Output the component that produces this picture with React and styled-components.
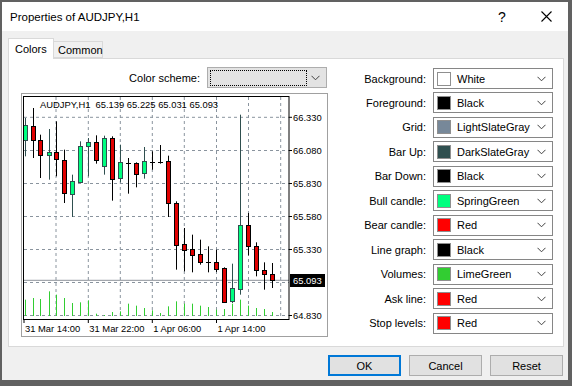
import React from "react";
import styled, { createGlobalStyle } from "styled-components";

const GlobalStyle = createGlobalStyle`
  html, body { margin: 0; padding: 0; background: #616161; }
  body { font-family: "Liberation Sans", Arial, sans-serif; font-size: 11px; color: #000; }
  * { box-sizing: border-box; }
`;

const Page = styled.div`
  width: 572px;
  height: 386px;
  overflow: hidden;
  padding: 2px 0 0 2px;
`;

const Window = styled.div`
  width: 566px;
  height: 378px;
  background: #f0f0f0;
  display: flex;
  flex-direction: column;
`;

const TitleBar = styled.div`
  height: 29px;
  background: #fff;
  display: flex;
  align-items: center;
  padding-left: 8px;
`;

const Title = styled.div`
  flex: 1;
  font-size: 11.5px;
`;

const CaptionButton = styled.div`
  width: 44px;
  height: 29px;
  display: flex;
  align-items: center;
  justify-content: center;
  font-size: 14px;
`;

const TabRow = styled.div`
  display: flex;
  align-items: flex-end;
  height: 20px;
  margin: 7px 0 0 6px;
  position: relative;
  z-index: 1;
`;

const Tab = styled.div`
  width: ${(p) => (p.$active ? 46 : 49)}px;
  height: ${(p) => (p.$active ? 21 : 17)}px;
  margin-bottom: ${(p) => (p.$active ? -1 : 0)}px;
  background: ${(p) => (p.$active ? "#fff" : "#f0f0f0")};
  border: 1px solid #d9d9d9;
  border-bottom: ${(p) => (p.$active ? "none" : "1px solid #d9d9d9")};
  border-left: ${(p) => (p.$active ? "1px solid #d9d9d9" : "none")};
  display: flex;
  align-items: center;
  padding-left: ${(p) => (p.$active ? 6 : 4)}px;
  padding-top: ${(p) => (p.$active ? 0 : 1)}px;
`;

const Panel = styled.div`
  margin-left: 6px;
  width: 556px;
  height: 289px;
  background: #fff;
  border: 1px solid #d9d9d9;
  display: flex;
  justify-content: space-between;
  padding: 8px 10px 0 12px;
`;

const LeftColumn = styled.div`
  width: 307px;
  display: flex;
  flex-direction: column;
  gap: 5px;
`;

const SchemeRow = styled.div`
  height: 21px;
  display: flex;
  justify-content: flex-end;
  align-items: center;
  gap: 7px;
  padding-right: 1px;
`;

const SchemeCombo = styled.div`
  width: 120px;
  height: 21px;
  background: #e3e3e3;
  border: 1px solid #adadad;
  display: flex;
  align-items: center;
  padding: 0 6px 0 2px;
  gap: 4px;
`;

const FocusRect = styled.div`
  flex: 1;
  height: 16px;
  border: 1px dotted #000;
`;

const ChartBox = styled.div`
  width: 307px;
  height: 244px;
  border: 1px solid #a0a0a0;
  background: #fff;
  svg { display: block; }
`;

const RightColumn = styled.div`
  margin-top: 1px;
  display: grid;
  grid-template-columns: auto 120px;
  grid-auto-rows: 21px;
  column-gap: 7px;
  row-gap: 3.47px;
  align-items: center;
  height: max-content;
`;

const RowLabel = styled.div`
  justify-self: end;
`;

const ColorCombo = styled.div`
  height: 21px;
  background: #fff;
  border: 1px solid #868686;
  display: flex;
  align-items: center;
  padding: 0 6px 0 3px;
`;

const Swatch = styled.div`
  width: 14px;
  height: 14px;
  border: 1px solid #8f8f8f;
  background: ${(p) => p.$color};
  margin-right: 6px;
`;

const ComboText = styled.div`
  flex: 1;
`;

const Footer = styled.div`
  display: flex;
  justify-content: flex-end;
  gap: 8px;
  padding: 8px 5px 0 0;
`;

const Button = styled.div`
  width: 73px;
  height: 21px;
  background: #e1e1e1;
  border: 1px solid ${(p) => (p.$default ? "#0078d7" : "#adadad")};
  box-shadow: ${(p) => (p.$default ? "inset 0 0 0 1px #0078d7" : "none")};
  display: flex;
  align-items: center;
  justify-content: center;
`;

const Chevron = () => (
  <svg width="9" height="6" viewBox="0 0 9 6">
    <polyline points="0.5,0.8 4.5,4.8 8.5,0.8" fill="none" stroke="#404040" strokeWidth="1" />
  </svg>
);

const CloseIcon = () => (
  <svg width="11" height="11" viewBox="0 0 11 11">
    <path d="M0.5 0.5 L10.5 10.5 M10.5 0.5 L0.5 10.5" stroke="#000" strokeWidth="1.1" />
  </svg>
);

const rows = [
  ["Background:", "#ffffff", "White"],
  ["Foreground:", "#000000", "Black"],
  ["Grid:", "#778899", "LightSlateGray"],
  ["Bar Up:", "#2f4f4f", "DarkSlateGray"],
  ["Bar Down:", "#000000", "Black"],
  ["Bull candle:", "#00ff7f", "SpringGreen"],
  ["Bear candle:", "#ff0000", "Red"],
  ["Line graph:", "#000000", "Black"],
  ["Volumes:", "#32cd32", "LimeGreen"],
  ["Ask line:", "#ff0000", "Red"],
  ["Stop levels:", "#ff0000", "Red"],
];

// candle data in zoomed reference units: [x, type, bodyTop, bodyBottom, wickTop, wickBottom]
const candles = [
  [14, "u", 97, 142, 75, 190],
  [38, "d", 100, 142, 45, 195],
  [61, "d", 142, 187, 125, 255],
  [86, "u", 178, 188, 108, 260],
  [109, "d", 178, 200, 85, 250],
  [133, "d", 202, 301, 170, 330],
  [157, "u", 265, 305, 245, 372],
  [181, "u", 160, 267, 145, 270],
  [205, "u", 148, 160, 135, 250],
  [229, "d", 148, 203, 127, 212],
  [253, "u", 135, 218, 128, 245],
  [277, "d", 135, 257, 130, 323],
  [301, "u", 208, 257, 155, 268],
  [325, "n", 209, 209, 195, 302],
  [349, "d", 210, 244, 208, 283],
  [373, "u", 205, 241, 162, 257],
  [397, "n", 206, 206, 175, 230],
  [421, "n", 207, 207, 156, 212],
  [445, "d", 205, 331, 188, 372],
  [469, "d", 331, 457, 325, 530],
  [493, "d", 453, 470, 405, 535],
  [517, "d", 468, 485, 425, 538],
  [541, "d", 484, 508, 440, 515],
  [565, "n", 508, 508, 460, 538],
  [589, "d", 507, 527, 470, 537],
  [613, "d", 525, 626, 523, 626],
  [637, "u", 586, 626, 512, 630],
  [661, "u", 397, 590, 65, 605],
  [685, "d", 397, 460, 360, 487],
  [709, "d", 460, 532, 448, 550],
  [733, "d", 532, 545, 508, 590],
  [757, "d", 544, 562, 510, 585],
];

const volumes = [620, 615, 618, 595, 605, 615, 630, 628, 622, 662, 666, 657, 655, 632, 638, 645, 652, 660, 640, 625, 632, 632, 638, 642, 650, 648, 632, 620, 638, 645, 648, 657];

const X = (z) => 20 + z / 3;
const Y = (z) => 93 + z / 3;

const priceLevels = [
  [117.3, "66.330"],
  [150.5, "66.080"],
  [183.5, "65.830"],
  [216.5, "65.580"],
  [249.5, "65.330"],
  [315.5, "64.830"],
];
const hGrid = [117.3, 150.5, 183.5, 216.5, 249.5, 282.5, 315.5];
const vGrid = [56, 88.3, 120.3, 152.3, 184.3, 216.5, 248.5, 280.7];
const times = [
  [24, "31 Mar 14:00"],
  [88.3, "31 Mar 22:00"],
  [152.3, "1 Apr 06:00"],
  [216.5, "1 Apr 14:00"],
];

const Chart = () => (
  <svg width="305" height="242" viewBox="22 94 305 242" fontFamily="Liberation Sans, Arial, sans-serif" fontSize="9.4">
    <defs>
      <clipPath id="plot">
        <rect x="24" y="97" width="265" height="222" />
      </clipPath>
    </defs>
    {hGrid.map((y) => (
      <line key={"h" + y} x1="24" x2="289" y1={y} y2={y} stroke="#8a949e" strokeDasharray="3 3" strokeWidth="1" />
    ))}
    {vGrid.map((x) => (
      <line key={"v" + x} x1={x} x2={x} y1="97" y2="319" stroke="#8a949e" strokeDasharray="3 3" strokeWidth="1" />
    ))}
    <line x1="24" x2="289" y1="280.3" y2="280.3" stroke="#8c9299" strokeWidth="1" />
    <g clipPath="url(#plot)">
      {volumes.map((v, i) => (
        <line key={"vol" + i} x1={Math.round(X(candles[i][0])) + 0.5} x2={Math.round(X(candles[i][0])) + 0.5} y1={Y(v)} y2="316" stroke="#32cd32" strokeWidth="1" />
      ))}
      {candles.map(([zx, t, bt, bb, wt, wb], i) => {
        const cx = Math.round(X(zx)) + 0.5;
        const wickColor = t === "u" ? "#2f4f4f" : "#000";
        return (
          <g key={"c" + i}>
            <line x1={cx} x2={cx} y1={Y(wt)} y2={Y(wb)} stroke={wickColor} strokeWidth="1" />
            {t === "n" ? (
              <line x1={cx - 2.5} x2={cx + 2.5} y1={Math.round(Y(bt)) + 0.5} y2={Math.round(Y(bt)) + 0.5} stroke={wickColor} strokeWidth="1" />
            ) : (
              <rect
                x={cx - 2}
                y={Math.round(Y(bt)) + 0.5}
                width="4"
                height={Math.max(2, Math.round(Y(bb) - Y(bt)))}
                fill={t === "u" ? "#00ff7f" : "#e00000"}
                stroke={t === "u" ? "#2f4f4f" : "#000"}
                strokeWidth="1"
              />
            )}
          </g>
        );
      })}
    </g>
    <rect x="23.5" y="96.5" width="265.5" height="223" fill="none" stroke="#000" strokeWidth="1" />
    <text x="40" y="108" fill="#000">AUDJPY,H1&#160;&#160;65.139 65.225 65.031 65.093</text>
    {priceLevels.map(([y, label]) => (
      <g key={label}>
        <line x1="289" x2="292" y1={y} y2={y} stroke="#000" strokeWidth="1" />
        <text x="293" y={y + 3.4} fill="#000">{label}</text>
      </g>
    ))}
    <rect x="290" y="274" width="35" height="13" fill="#000" />
    <text x="293" y="283.8" fill="#fff">65.093</text>
    {times.map(([x, label]) => (
      <g key={label}>
        <line x1={x} x2={x} y1="319" y2="323" stroke="#000" strokeWidth="1" />
        <text x={x + 1} y="332" fill="#000">{label}</text>
      </g>
    ))}
  </svg>
);

export default function App() {
  return (
    <>
      <GlobalStyle />
      <Page>
        <Window>
          <TitleBar>
            <Title>Properties of AUDJPY,H1</Title>
            <CaptionButton>?</CaptionButton>
            <CaptionButton>
              <CloseIcon />
            </CaptionButton>
          </TitleBar>
          <TabRow>
            <Tab $active>Colors</Tab>
            <Tab>Common</Tab>
          </TabRow>
          <Panel>
            <LeftColumn>
              <SchemeRow>
                <span>Color scheme:</span>
                <SchemeCombo>
                  <FocusRect />
                  <Chevron />
                </SchemeCombo>
              </SchemeRow>
              <ChartBox>
                <Chart />
              </ChartBox>
            </LeftColumn>
            <RightColumn>
              {rows.map(([label, color, name]) => (
                <React.Fragment key={label}>
                  <RowLabel>{label}</RowLabel>
                  <ColorCombo>
                    <Swatch $color={color} />
                    <ComboText>{name}</ComboText>
                    <Chevron />
                  </ColorCombo>
                </React.Fragment>
              ))}
            </RightColumn>
          </Panel>
          <Footer>
            <Button $default>OK</Button>
            <Button>Cancel</Button>
            <Button>Reset</Button>
          </Footer>
        </Window>
      </Page>
    </>
  );
}
